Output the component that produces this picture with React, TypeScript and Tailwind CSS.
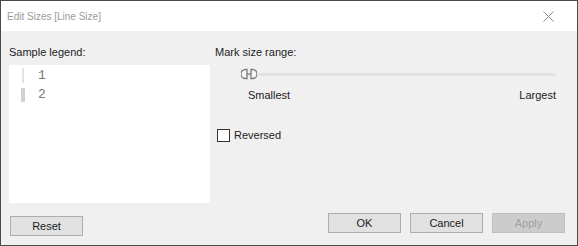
import React from 'react';

const font = { fontFamily: '"Liberation Sans", Arial, sans-serif' };

function Thumb() {
  return (
    <svg width="16" height="12" viewBox="0 0 16 12" className="shrink-0">
      <path d="M6 1.5 H4.5 A4.5 4.5 0 0 0 4.5 10.5 H6 Z" fill="#f7f7f7" stroke="#7a7a7a" strokeWidth="1.3" />
      <line x1="6" y1="6" x2="10" y2="6" stroke="#7a7a7a" strokeWidth="1.3" />
      <path d="M10 1.5 H11.5 A4.5 4.5 0 0 1 11.5 10.5 H10 Z" fill="#f7f7f7" stroke="#7a7a7a" strokeWidth="1.3" />
    </svg>
  );
}

function Btn({ label, disabled = false }: { label: string; disabled?: boolean }) {
  return (
    <button
      className={
        disabled
          ? 'w-[73px] h-[20px] border border-[#bfbfbf] bg-[#cccccc] text-[11px] text-[#a0a0a0]'
          : 'w-[73px] h-[20px] border border-[#adadad] bg-[#e1e1e1] text-[11px] text-[#1a1a1a]'
      }
    >
      {label}
    </button>
  );
}

export default function App() {
  return (
    <div className="w-[578px] h-[246px] border border-[#4a4a4a] flex flex-col bg-[#f0f0f0]" style={font}>
      {/* Title bar */}
      <div className="h-[30px] bg-white flex items-center justify-between pl-[6px] pr-[23px]">
        <span className="text-[10px] text-[#9a9a9a]">Edit Sizes [Line Size]</span>
        <svg width="11" height="11" viewBox="0 0 11 11">
          <path d="M0.5 0.5 L10.5 10.5 M10.5 0.5 L0.5 10.5" stroke="#8a8a8a" strokeWidth="1" />
        </svg>
      </div>

      {/* Body */}
      <div className="flex-1 flex flex-col pt-[13px] pl-[8px] pr-[12px]">
        <div className="flex gap-[5px]">
          <div className="w-[201px] flex flex-col gap-[5px]">
            <div className="h-[16px] leading-[16px] text-[11px] text-[#222]">Sample legend:</div>
            <div className="h-[138px] bg-white pt-[3px] pl-[12px] flex flex-col gap-[4px]">
              <div className="flex items-center h-[15px] gap-[13px]">
                <div className="w-[2px] h-[15px] bg-[#e3e3e3] ml-[1px] mr-[1px]" />
                <span className="text-[13px] text-[#7a7a7a]" style={{ fontFamily: '"Liberation Mono", monospace' }}>1</span>
              </div>
              <div className="flex items-center h-[15px] gap-[13px]">
                <div className="w-[4px] h-[14px] bg-[#d2d2d2]" />
                <span className="text-[13px] text-[#7a7a7a]" style={{ fontFamily: '"Liberation Mono", monospace' }}>2</span>
              </div>
            </div>
          </div>

          <div className="flex-1 flex flex-col pr-[9px]">
            <div className="h-[16px] leading-[16px] text-[11px] text-[#222]">Mark size range:</div>
            <div className="flex items-center mt-[8px] pl-[26px] h-[12px]">
              <Thumb />
              <div className="flex-1 h-[3px] bg-[#e3e3e3]" />
            </div>
            <div className="flex justify-between pl-[33px] mt-[7px] h-[16px] leading-[16px] text-[11px] text-[#222]">
              <span>Smallest</span>
              <span>Largest</span>
            </div>
            <label className="flex items-center gap-[4px] mt-[24px] ml-[2px] text-[11px] text-[#222]">
              <span className="w-[13px] h-[13px] border border-[#333] bg-white" />
              <span>Reversed</span>
            </label>
          </div>
        </div>

        <div className="flex mt-[10px]">
          <div className="ml-[1px]"><Btn label="Reset" /></div>
          <div className="flex-1" />
          <div className="flex gap-[9px]">
            <Btn label="OK" />
            <Btn label="Cancel" />
            <Btn label="Apply" disabled />
          </div>
        </div>
      </div>
    </div>
  );
}
